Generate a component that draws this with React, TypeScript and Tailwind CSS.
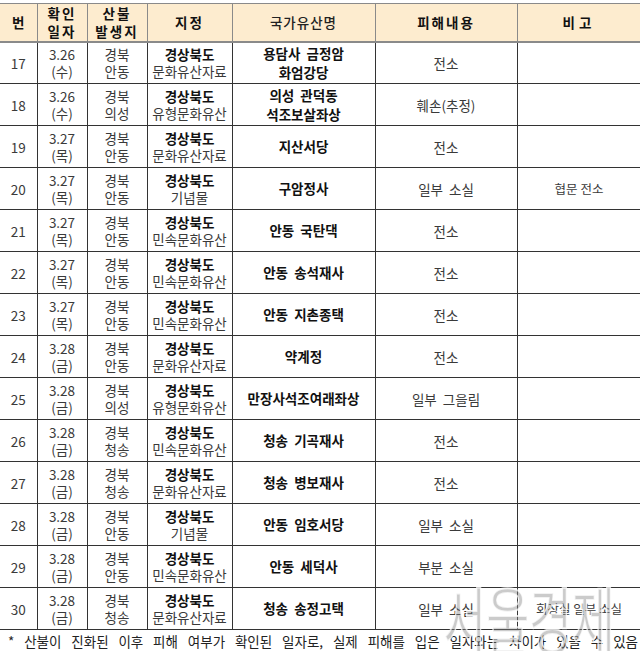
const rows = [
  { no: 17, date: "3.26", day: "(수)", area: "안동", kind: "문화유산자료", name: ["용담사 금정암", "화엄강당"], dmg: "전소", note: "" },
  { no: 18, date: "3.26", day: "(수)", area: "의성", kind: "유형문화유산", name: ["의성 관덕동", "석조보살좌상"], dmg: "훼손(추정)", note: "" },
  { no: 19, date: "3.27", day: "(목)", area: "안동", kind: "문화유산자료", name: ["지산서당"], dmg: "전소", note: "" },
  { no: 20, date: "3.27", day: "(목)", area: "안동", kind: "기념물", name: ["구암정사"], dmg: "일부 소실", note: "협문 전소" },
  { no: 21, date: "3.27", day: "(목)", area: "안동", kind: "민속문화유산", name: ["안동 국탄댁"], dmg: "전소", note: "" },
  { no: 22, date: "3.27", day: "(목)", area: "안동", kind: "민속문화유산", name: ["안동 송석재사"], dmg: "전소", note: "" },
  { no: 23, date: "3.27", day: "(목)", area: "안동", kind: "민속문화유산", name: ["안동 지촌종택"], dmg: "전소", note: "" },
  { no: 24, date: "3.28", day: "(금)", area: "안동", kind: "문화유산자료", name: ["약계정"], dmg: "전소", note: "" },
  { no: 25, date: "3.28", day: "(금)", area: "의성", kind: "유형문화유산", name: ["만장사석조여래좌상"], dmg: "일부 그을림", note: "" },
  { no: 26, date: "3.28", day: "(금)", area: "청송", kind: "민속문화유산", name: ["청송 기곡재사"], dmg: "전소", note: "" },
  { no: 27, date: "3.28", day: "(금)", area: "청송", kind: "문화유산자료", name: ["청송 병보재사"], dmg: "전소", note: "" },
  { no: 28, date: "3.28", day: "(금)", area: "안동", kind: "기념물", name: ["안동 임호서당"], dmg: "일부 소실", note: "" },
  { no: 29, date: "3.28", day: "(금)", area: "안동", kind: "민속문화유산", name: ["안동 세덕사"], dmg: "부분 소실", note: "" },
  { no: 30, date: "3.28", day: "(금)", area: "청송", kind: "문화유산자료", name: ["청송 송정고택"], dmg: "일부 소실", note: "회장실 일부 소실" },
];

export default function App() {
  return (
    <div
      className="relative w-[640px] h-[651px] overflow-hidden bg-white pt-[3px] text-[#3a3a3a]"
      style={{ fontFamily: '"Noto Sans CJK KR", "Noto Sans", sans-serif' }}
    >
      <table className="w-[641px] table-fixed border-collapse text-center text-[13.5px] leading-[18px]">
        <colgroup>
          <col className="w-[37px]" />
          <col className="w-[50px]" />
          <col className="w-[60px]" />
          <col className="w-[85px]" />
          <col className="w-[143px]" />
          <col className="w-[142px]" />
          <col className="w-[124px]" />
        </colgroup>
        <thead>
          <tr className="h-[38px] bg-[#fdeccf] font-bold text-[#111]">
            <th className="border-t border-t-[#8a8a8a] border-b-2 border-b-[#8a8a8a]">번</th>
            <th className="border border-[#8a8a8a] border-b-2 tracking-[2px]">
              확인
              <br />
              일자
            </th>
            <th className="border border-[#8a8a8a] border-b-2 tracking-[2px]">
              산불
              <br />
              발생지
            </th>
            <th className="border border-[#8a8a8a] border-b-2 tracking-[2px]">지정</th>
            <th className="border border-[#8a8a8a] border-b-2 tracking-[1px] font-medium text-[#222]">국가유산명</th>
            <th className="border border-[#8a8a8a] border-b-2 tracking-[2px]">피해내용</th>
            <th className="border border-[#8a8a8a] border-b-2 tracking-[4px]">비고</th>
          </tr>
        </thead>
        <tbody>
          {rows.map((r) => (
            <tr key={r.no} className="h-[42px]">
              <td className="border-b border-[#333]">{r.no}</td>
              <td className="border border-[#333] leading-[17px]">
                {r.date}
                <br />
                {r.day}
              </td>
              <td className="border border-[#333] leading-[17px]">
                경북
                <br />
                {r.area}
              </td>
              <td className="border border-[#333] whitespace-nowrap leading-[17px]">
                <span className="font-bold text-[#111]">경상북도</span>
                <br />
                {r.kind}
              </td>
              <td className="border border-[#333] font-bold text-[#111] whitespace-pre leading-[19px]">
                {r.name.map((n, i) => (
                  <div key={i}>{n.replace(" ", "  ")}</div>
                ))}
              </td>
              <td className="border border-[#333] whitespace-pre">{r.dmg.replace(" ", "  ")}</td>
              <td className="border border-[#333] text-[12.5px] whitespace-pre">{r.note}</td>
            </tr>
          ))}
        </tbody>
      </table>
      <p className="mt-[2px] pl-[8px] pr-[2px] text-[13.5px] leading-[18px] text-[#222] text-justify [text-align-last:justify]">
        * 산불이 진화된 이후 피해 여부가 확인된 일자로, 실제 피해를 입은 일자와는 차이가 있을 수 있음
      </p>
      <div className="pointer-events-none absolute left-[443px] top-[580px] origin-left scale-x-[0.64] whitespace-nowrap text-[74px] font-normal leading-none tracking-[-1px] text-[rgba(130,130,130,0.42)] [-webkit-text-stroke:2px_rgba(255,255,255,0.75)]">
        서울경제
      </div>
    </div>
  );
}
